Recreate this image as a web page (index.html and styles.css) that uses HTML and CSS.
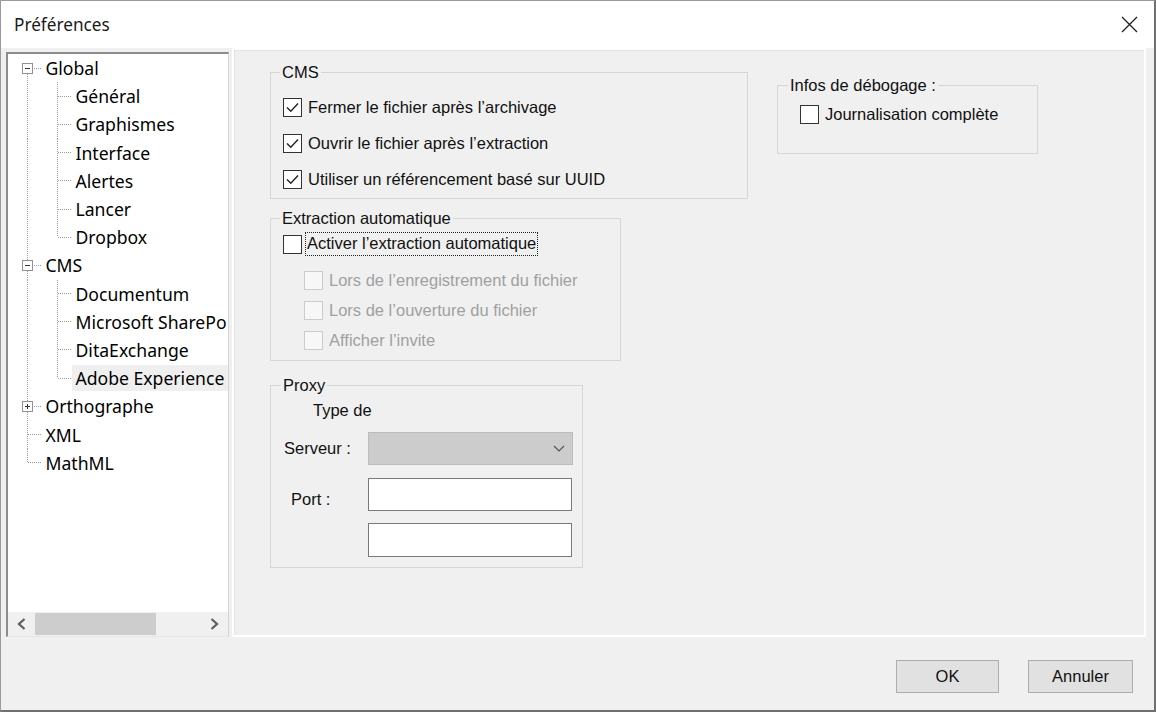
FILE: index.html
```html
<!DOCTYPE html>
<html lang="fr">
<head>
  <meta charset="UTF-8" />
  <title>Préférences</title>
  <link rel="stylesheet" href="styles.css">
</head>
<body>

<div class="window">
  <header class="titlebar">
    <span class="title">Préférences</span>
    <span class="close">
      <svg width="17" height="17" viewBox="0 0 17 17"><path d="M1 1L16 16M16 1L1 16" stroke="#1f1f1f" stroke-width="1.3" fill="none"/></svg>
    </span>
  </header>

  <div class="main">
    <div class="tree">
      <div class="tree-items">
        <div class="node"><span class="cell c-first"><span class="exp"></span></span><span class="label">Global</span></div>
        <div class="node"><span class="cell c-pipe"></span><span class="cell c-tee"></span><span class="label">Général</span></div>
        <div class="node"><span class="cell c-pipe"></span><span class="cell c-tee"></span><span class="label">Graphismes</span></div>
        <div class="node"><span class="cell c-pipe"></span><span class="cell c-tee"></span><span class="label">Interface</span></div>
        <div class="node"><span class="cell c-pipe"></span><span class="cell c-tee"></span><span class="label">Alertes</span></div>
        <div class="node"><span class="cell c-pipe"></span><span class="cell c-tee"></span><span class="label">Lancer</span></div>
        <div class="node"><span class="cell c-pipe"></span><span class="cell c-elbow"></span><span class="label">Dropbox</span></div>
        <div class="node"><span class="cell c-tee"><span class="exp"></span></span><span class="label">CMS</span></div>
        <div class="node"><span class="cell c-pipe"></span><span class="cell c-tee"></span><span class="label">Documentum</span></div>
        <div class="node"><span class="cell c-pipe"></span><span class="cell c-tee"></span><span class="label">Microsoft SharePo</span></div>
        <div class="node"><span class="cell c-pipe"></span><span class="cell c-tee"></span><span class="label">DitaExchange</span></div>
        <div class="node"><span class="cell c-pipe"></span><span class="cell c-elbow"></span><span class="label selected">Adobe Experience</span></div>
        <div class="node"><span class="cell c-tee"><span class="exp plus"></span></span><span class="label">Orthographe</span></div>
        <div class="node"><span class="cell c-tee"></span><span class="label">XML</span></div>
        <div class="node"><span class="cell c-elbow"></span><span class="label">MathML</span></div>
      </div>
      <div class="hscroll">
        <span class="arrow">
          <svg width="9" height="12" viewBox="0 0 9 12"><path d="M7.5 1L2 6L7.5 11" stroke="#606060" stroke-width="2.3" fill="none"/></svg>
        </span>
        <span class="thumb"></span>
        <span class="track"></span>
        <span class="arrow">
          <svg width="9" height="12" viewBox="0 0 9 12"><path d="M1.5 1L7 6L1.5 11" stroke="#606060" stroke-width="2.3" fill="none"/></svg>
        </span>
      </div>
    </div>

    <div class="panel">
      <div class="col">
        <fieldset class="group cms">
          <legend>CMS</legend>
          <div class="rows">
            <div class="check"><span class="box on"></span>Fermer le fichier après l’archivage</div>
            <div class="check"><span class="box on"></span>Ouvrir le fichier après l’extraction</div>
            <div class="check"><span class="box on"></span>Utiliser un référencement basé sur UUID</div>
          </div>
        </fieldset>

        <fieldset class="group extract">
          <legend>Extraction automatique</legend>
          <div class="rows">
            <div class="check first"><span class="box"></span><span class="focus">Activer l’extraction automatique</span></div>
            <div class="sub">
              <div class="check off"><span class="box"></span>Lors de l’enregistrement du fichier</div>
              <div class="check off"><span class="box"></span>Lors de l’ouverture du fichier</div>
              <div class="check off"><span class="box"></span>Afficher l’invite</div>
            </div>
          </div>
        </fieldset>

        <fieldset class="group proxy">
          <legend>Proxy</legend>
          <div class="proxy-type">Type de</div>
          <div class="prow combo-row">
            <span class="plabel">Serveur :</span>
            <span class="combo">
              <svg width="12" height="7" viewBox="0 0 12 7"><path d="M1 1L6 6L11 1" stroke="#555" stroke-width="1.2" fill="none"/></svg>
            </span>
          </div>
          <div class="prow port-row">
            <span class="plabel port">Port :</span>
            <input class="field" type="text">
          </div>
          <div class="prow extra-row">
            <span class="plabel"></span>
            <input class="field tall" type="text">
          </div>
        </fieldset>
      </div>

      <fieldset class="group debug">
        <legend>Infos de débogage :</legend>
        <div class="rows">
          <div class="check"><span class="box"></span>Journalisation complète</div>
        </div>
      </fieldset>
    </div>
  </div>

  <footer class="footer">
    <button class="btn ok">OK</button>
    <button class="btn cancel">Annuler</button>
  </footer>
</div>

</body>
</html>
```

FILE: styles.css
```css
body {
  margin: 0;
  font-family: "Liberation Sans", Arial, sans-serif;
  font-size: 16.5px;
  color: #111;
}

.window {
  width: 1156px;
  height: 712px;
  box-sizing: border-box;
  border: 1px solid #9a9a9a;
  border-right: 2px solid #707070;
  border-bottom: 2px solid #707070;
  background: #f0f0f0;
  display: flex;
  flex-direction: column;
}

/* title bar */
.titlebar {
  height: 47px;
  flex: none;
  background: #fff;
  display: flex;
  align-items: center;
  justify-content: space-between;
  padding: 0 16px 0 13px;
}

.title {
  font-family: "Noto Sans", sans-serif;
  font-size: 17.2px;
  color: #1a1a1a;
}

.close {
  display: flex;
}

/* main area */
.main {
  height: 589px;
  flex: none;
  display: flex;
  padding: 0 8px 0 5px;
}

.tree {
  margin-top: 4px;
  width: 223px;
  box-sizing: border-box;
  border-style: solid;
  border-width: 2px 1px 1px 2px;
  border-color: #8c8c8c #d4d4d4 #e6e6e6 #8c8c8c;
  background: #fff;
  display: flex;
  flex-direction: column;
}

.tree-items {
  flex: 1;
  overflow: hidden;
  padding-left: 4px;
  font-family: "Noto Sans", sans-serif;
  font-size: 17.6px;
  color: #000;
  --v: repeating-linear-gradient(to bottom, #9a9a9a 0 1px, transparent 1px 2px);
  --h: repeating-linear-gradient(to right, #9a9a9a 0 1px, transparent 1px 2px);
}

.node {
  height: 28.2px;
  display: flex;
  align-items: center;
  white-space: nowrap;
}

.cell {
  width: 30px;
  height: 100%;
  flex: none;
  display: flex;
  align-items: center;
}

.c-pipe {
  background: var(--v) 15px 0 / 1px 100% no-repeat;
}

.c-tee {
  background: var(--v) 15px 0 / 1px 100% no-repeat,
              var(--h) 16px 50% / 14px 1px no-repeat;
}

.c-elbow {
  background: var(--v) 15px 0 / 1px 50% no-repeat,
              var(--h) 16px 50% / 14px 1px no-repeat;
}

.c-first {
  background: var(--v) 15px 100% / 1px 50% no-repeat,
              var(--h) 16px 50% / 14px 1px no-repeat;
}

.exp {
  width: 11px;
  height: 11px;
  margin-left: 10px;
  box-sizing: border-box;
  border: 1px solid #919191;
  background: linear-gradient(#333, #333) center / 5px 1px no-repeat, #fff;
}

.exp.plus {
  background: linear-gradient(#333, #333) center / 5px 1px no-repeat,
              linear-gradient(#333, #333) center / 1px 5px no-repeat, #fff;
}

.label {
  padding: 0 3px 0 3.5px;
  line-height: 26px;
}

.label.selected {
  flex: 1 0 auto;
  background: #efefef;
}

.hscroll {
  height: 24px;
  flex: none;
  display: flex;
  background: #f0f0f0;
}

.arrow {
  width: 27px;
  flex: none;
  display: flex;
  align-items: center;
  justify-content: center;
}

.thumb {
  width: 121px;
  margin: 1px 0;
  background: #cdcdcd;
}

.track {
  flex: 1;
}

/* right panel */
.panel {
  flex: 1;
  margin-left: 3px;
  border: 2px solid #fff;
  box-shadow: inset 1px 1px 0 #e3e3e3;
  display: flex;
  align-items: flex-start;
  padding: 13px 0 0 36px;
}

.col {
  width: 478px;
  flex: none;
}

.group {
  margin: 0;
  padding: 0;
  box-sizing: border-box;
  border: 1px solid #d6d6d6;
  min-width: 0;
}

.group legend {
  margin-left: 9px;
  padding: 0 2px;
  line-height: 18px;
}

.check {
  height: 36px;
  display: flex;
  align-items: center;
  white-space: nowrap;
}

.box {
  width: 19px;
  height: 19px;
  flex: none;
  box-sizing: border-box;
  border: 1px solid #333;
  background: #fff;
  margin-right: 6px;
}

.box.on {
  background: url("data:image/svg+xml,%3Csvg xmlns='http://www.w3.org/2000/svg' width='17' height='17'%3E%3Cpath d='M3 8.5L6.8 12.3L14 4.5' stroke='%23222' stroke-width='1.4' fill='none'/%3E%3C/svg%3E") center no-repeat, #fff;
}

.cms {
  width: 478px;
  height: 136px;
}

.cms .rows {
  padding: 8px 0 0 12px;
}

.extract {
  width: 351px;
  height: 152px;
  margin-top: 10px;
}

.extract .rows {
  padding: 4px 0 0 12px;
}

.check.first {
  height: 26px;
}

.focus {
  outline: 1px dotted #222;
  padding: 1px 1px 2px 1px;
  margin-left: -2px;
}

.sub {
  margin: 8px 0 0 21px;
}

.check.off {
  height: 30px;
  color: #a0a0a0;
}

.check.off .box {
  border-color: #cccccc;
  background: #f7f7f7;
}

.proxy {
  width: 313px;
  height: 192px;
  margin-top: 15px;
}

.proxy legend {
  margin-left: 10px;
}

.proxy-type {
  margin-top: 6px;
  padding-left: 42px;
  line-height: 20px;
}

.prow {
  display: flex;
  align-items: center;
}

.plabel {
  width: 97px;
  flex: none;
  box-sizing: border-box;
  padding-left: 13px;
}

.plabel.port {
  padding: 9px 0 0 20px;
}

.combo-row {
  margin-top: 12px;
}

.combo {
  width: 205px;
  height: 33px;
  box-sizing: border-box;
  border: 1px solid #bcbcbc;
  background: #cccccc;
  display: flex;
  align-items: center;
  justify-content: flex-end;
  padding-right: 7px;
}

.port-row {
  margin-top: 13px;
}

.extra-row {
  margin-top: 12px;
}

.field {
  width: 204px;
  height: 33px;
  margin: 0;
  box-sizing: border-box;
  border: 1px solid #7a7a7a;
  background: #fff;
  padding: 0;
}

.field.tall {
  height: 34px;
}

.debug {
  width: 261px;
  height: 78px;
  margin: 13px 0 0 29px;
}

.debug legend {
  margin-left: 10px;
}

.debug .rows {
  padding: 7px 0 0 22px;
}

.debug .check {
  height: 26px;
}

/* footer */
.footer {
  flex: 1;
  display: flex;
  justify-content: flex-end;
  align-items: flex-start;
  gap: 29px;
  padding: 23px 21px 0 0;
}

.btn {
  height: 33px;
  margin: 0;
  border: 1px solid #adadad;
  background: #e1e1e1;
  font-family: "Liberation Sans", Arial, sans-serif;
  font-size: 16.5px;
  color: #111;
  padding: 0;
}

.btn.ok {
  width: 103px;
}

.btn.cancel {
  width: 105px;
}
```
